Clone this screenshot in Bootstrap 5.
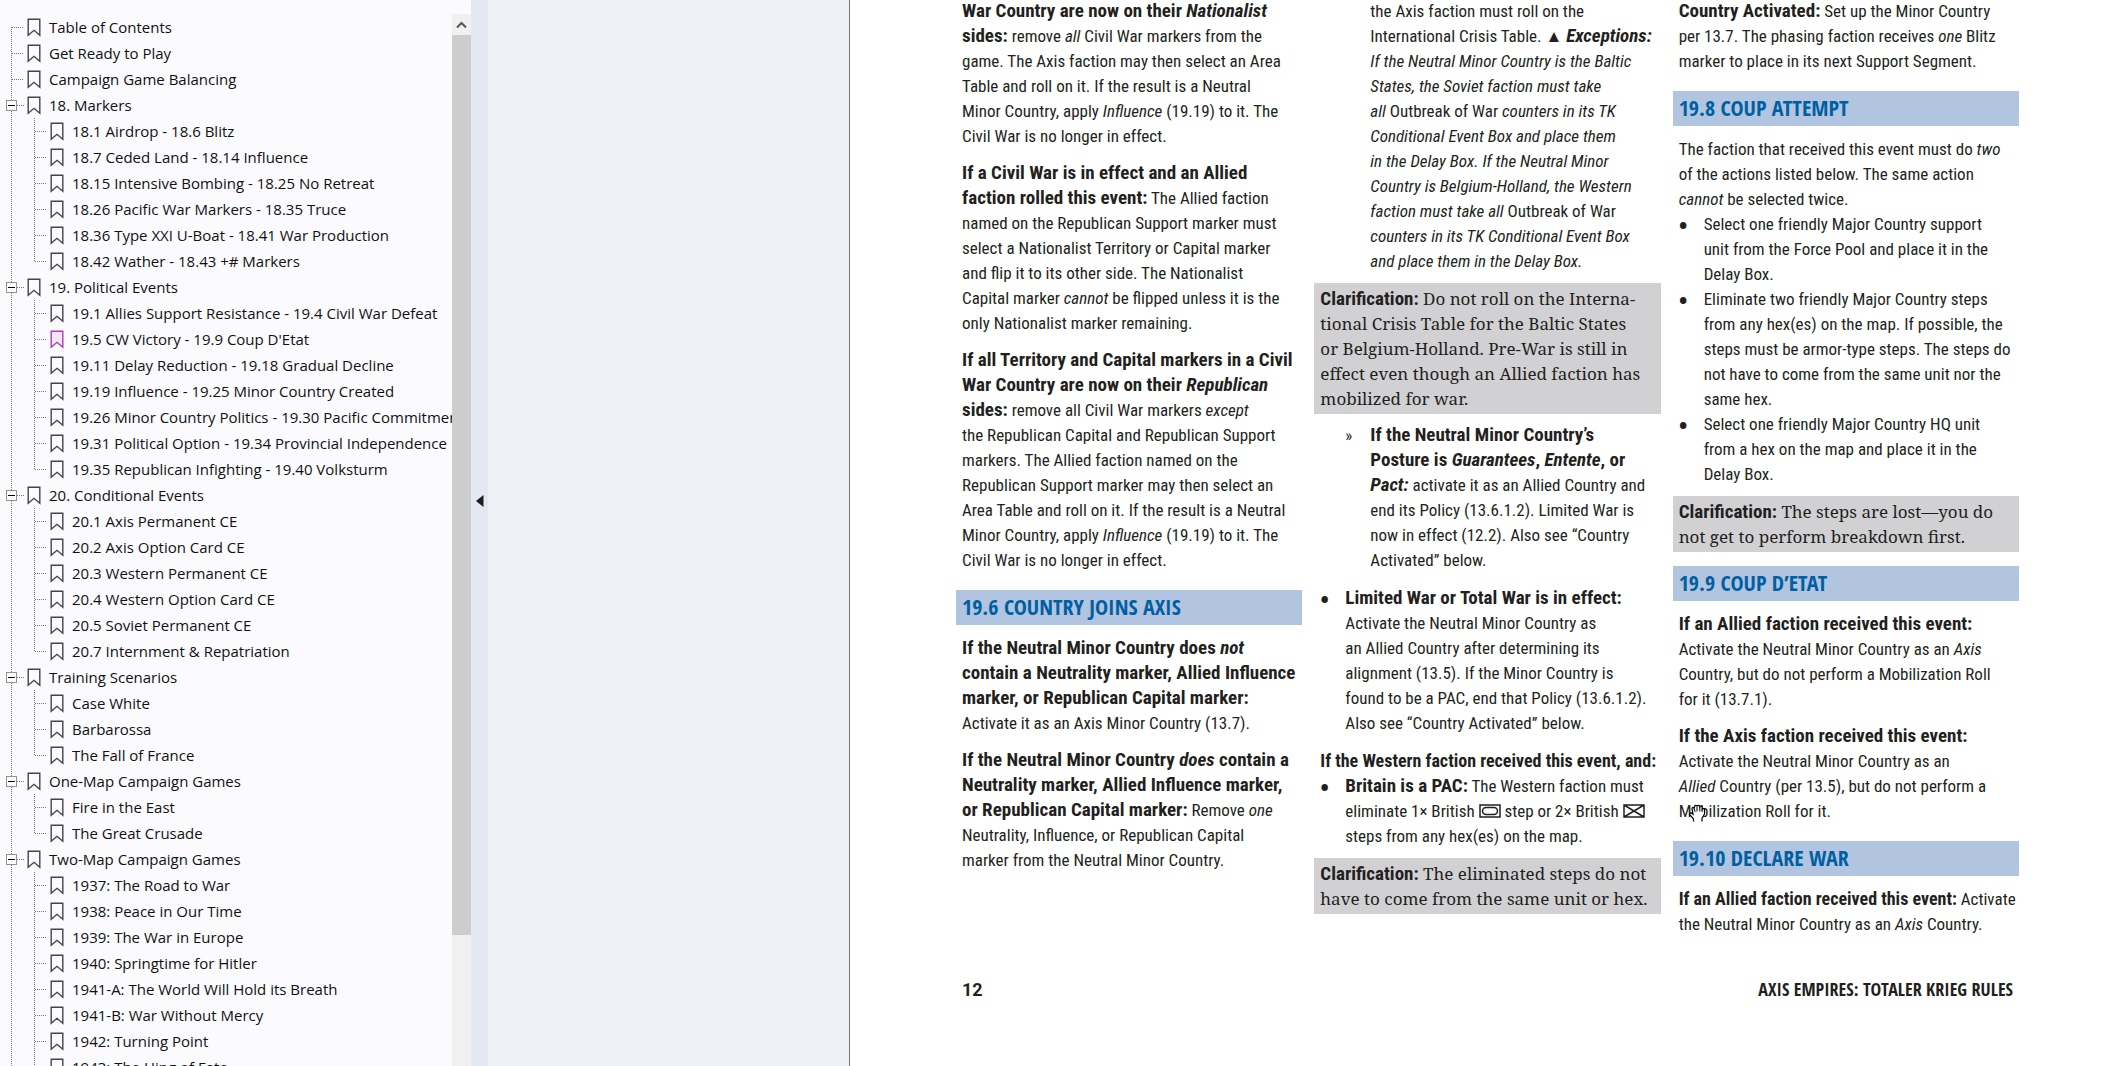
<!DOCTYPE html>
<html lang="en">
<head>
<meta charset="utf-8">
<meta name="viewport" content="width=device-width, initial-scale=1">
<title>Axis Empires: Totaler Krieg Rules</title>
<link href="https://cdn.jsdelivr.net/npm/bootstrap@5.3.0/dist/css/bootstrap.min.css" rel="stylesheet">
<style>
  body { background: #eff0f5; font-family: "Open Sans", "Noto Sans", sans-serif; }
  .outline-pane { width: 471px; background: #fbfbfe; padding-top: 14px; }
  .outline-tree { font-size: 15px; line-height: 26px; color: #111; }
  .outline-tree ul, .outline-tree { list-style: none; margin: 0; padding: 0; }
  .dots-v { background: repeating-linear-gradient(#777 0 1px, transparent 1px 2px) 11px 13px / 1px 100% no-repeat; }
  .outline-tree ul { background: repeating-linear-gradient(#777 0 1px, transparent 1px 2px) 34px 0 / 1px calc(100% - 13px) no-repeat; }
  .outline-row { height: 26px; padding-left: 12px; white-space: nowrap; }
  .outline-row::before { content: ""; width: 12px; height: 1px; margin-right: 3px; flex: none; background: repeating-linear-gradient(90deg, #777 0 1px, transparent 1px 2px); }
  .outline-tree ul .outline-row { padding-left: 35px; }
  .outline-row.has-kids { padding-left: 6px; }
  .outline-row.has-kids::before { order: 1; width: 7px; }
  .outline-row.has-kids a { order: 2; }
  .toggle { width: 11px; height: 11px; border: 1px solid #919191; background: #fff; flex: none; }
  .toggle::before { content: ""; width: 7px; height: 1px; background: #000; }
  .outline-row a { color: inherit; text-decoration: none; gap: 8px; }
  .outline-row svg { width: 14px; height: 19px; fill: none; stroke: #454548; stroke-width: 1.4; flex: none; }
  .outline-row .current svg { stroke: #a93fb5; fill: #f5e6f5; }
  .scroll-track { width: 19px; background: #f0f0f0; flex: none; }
  .scroll-up { height: 21px; background: #f0f0f0; flex: none; }
  .scroll-thumb { height: 900px; background: #cdcdcd; }
  .splitter { width: 17px; background: #e5e8f2; flex: none; }
  .pane-gap { width: 361px; background: #eff0f5; flex: none; }
  .sheet { border-left: 1px solid #77787b; background: #fff; color: #231f20; font-family: "Roboto Condensed", "Open Sans Condensed", Roboto, sans-serif; font-size: 17px; font-weight: 400; line-height: 25px; padding: 0 92px 0 106px; white-space: nowrap; }
  .sheet b { font-size: 19px; font-weight: 700; line-height: 1; }
  .sheet .tight b { font-size: 18px; }
  .rules-cols { gap: 12px; margin-top: -1px; height: 978px; }
  .rules-col { flex: 1 1 0; min-width: 0; }
  .rules-col p { margin: 0 6px 12px; }
  .rules-col ul { list-style: none; margin: 0 6px 13px; padding: 0 0 0 25px; }
  .rules-col li::before { content: "•"; float: left; margin-left: -25px; font-family: "Open Sans Condensed", Roboto, sans-serif; font-weight: 700; font-size: 24px; }
  .rules-col li li::before { content: "»"; font-family: "Roboto Condensed", Roboto, sans-serif; font-size: 17px; font-weight: 400; }
  .rules-col ul ul { margin: 0; }
  .rules-col li.unmarked::before { content: none; }
  .rules-col h2 { margin: 17px 0 11px; padding: 0 6px 2px; font-family: "Open Sans Condensed", "Roboto Condensed", sans-serif; font-size: 22px; font-weight: 700; line-height: 33px; color: #005fa3; background: #b1c4e0; }
  .rules-col .clarify { margin: 9px 0; padding: 3px 6px; background: #d1d1d3; font-family: "Noto Serif", "Liberation Serif", serif; }
  .rules-col .clarify + h2 { margin-top: 14px; }
  .clarify b { font-family: "Roboto Condensed", "Open Sans Condensed", Roboto, sans-serif; }
  .unit-sym { width: 22px; height: 14px; vertical-align: -1px; fill: none; stroke: #231f20; stroke-width: 1.5; }
  .hand { left: 10px; top: 3px; width: 17px; height: 18px; }
  .sheet-foot { padding: 0 6px; font-family: "Open Sans Condensed", "Roboto Condensed", sans-serif; font-size: 18px; font-weight: 700; }
  .page-no { font-family: Roboto, sans-serif; }
</style>
</head>
<body class="vh-100 overflow-hidden">
<svg class="d-none" xmlns="http://www.w3.org/2000/svg">
  <symbol id="bm" viewBox="0 0 14 19"><path d="M1.2 1.2H12.8V17.3L7 12.3L1.2 17.3Z"/></symbol>
</svg>
<div class="d-flex h-100 align-items-stretch">
  <aside class="outline-pane d-flex flex-shrink-0 overflow-hidden" aria-label="Bookmarks">
    <nav class="flex-grow-1 overflow-hidden" aria-label="Document outline">
      <ul class="outline-tree dots-v" id="tree"></ul>
    </nav>
    <div class="scroll-track d-flex flex-column">
      <button class="scroll-up border-0 p-0 d-flex align-items-center justify-content-center" type="button" aria-label="Scroll up">
        <svg width="11" height="8" viewBox="0 0 11 8" fill="none" stroke="#555" stroke-width="2"><path d="M1 6.5L5.5 2L10 6.5"/></svg>
      </button>
      <div class="scroll-thumb"></div>
    </div>
  </aside>
  <div class="splitter d-flex align-items-center justify-content-center">
    <button type="button" class="border-0 bg-transparent p-0 d-flex pb-5 mb-3" aria-label="Collapse panel">
      <svg width="8" height="12" viewBox="0 0 8 12"><path d="M7.5 0V12L0 6Z" fill="#1c1c1c"/></svg>
    </button>
  </div>
  <div class="pane-gap"></div>
  <main class="sheet flex-grow-1 overflow-hidden">
    <div class="rules-cols d-flex">
      <section class="rules-col">
        <p><b>War Country are now on their <i>Nationalist</i><br>sides:</b> remove <i>all</i> Civil War markers from the<br>game. The Axis faction may then select an Area<br>Table and roll on it. If the result is a Neutral<br>Minor Country, apply <i>Influence</i> (19.19) to it. The<br>Civil War is no longer in effect.</p>
        <p><b>If a Civil War is in effect and an Allied<br>faction rolled this event:</b> The Allied faction<br>named on the Republican Support marker must<br>select a Nationalist Territory or Capital marker<br>and flip it to its other side. The Nationalist<br>Capital marker <i>cannot</i> be flipped unless it is the<br>only Nationalist marker remaining.</p>
        <p><b>If all Territory and Capital markers in a Civil<br>War Country are now on their <i>Republican</i><br>sides:</b> remove all Civil War markers <i>except</i><br>the Republican Capital and Republican Support<br>markers. The Allied faction named on the<br>Republican Support marker may then select an<br>Area Table and roll on it. If the result is a Neutral<br>Minor Country, apply <i>Influence</i> (19.19) to it. The<br>Civil War is no longer in effect.</p>
        <h2>19.6 COUNTRY JOINS AXIS</h2>
        <p><b>If the Neutral Minor Country does <i>not</i><br>contain a Neutrality marker, Allied Influence<br>marker, or Republican Capital marker:</b><br>Activate it as an Axis Minor Country (13.7).</p>
        <p><b>If the Neutral Minor Country <i>does</i> contain a<br>Neutrality marker, Allied Influence marker,<br>or Republican Capital marker:</b> Remove <i>one</i><br>Neutrality, Influence, or Republican Capital<br>marker from the Neutral Minor Country.</p>
      </section>
      <section class="rules-col">
        <ul class="mb-0"><li class="unmarked"><ul><li class="unmarked">the Axis faction must roll on the<br>International Crisis Table. ▲ <b><i>Exceptions:</i></b><br><i>If the Neutral Minor Country is the Baltic<br>States, the Soviet faction must take<br>all</i> Outbreak of War <i>counters in its TK<br>Conditional Event Box and place them<br>in the Delay Box. If the Neutral Minor<br>Country is Belgium-Holland, the Western<br>faction must take all</i> Outbreak of War<br><i>counters in its TK Conditional Event Box<br>and place them in the Delay Box.</i></li></ul></li></ul>
        <p class="clarify"><b>Clarification:</b> Do not roll on the Interna-<br>tional Crisis Table for the Baltic States<br>or Belgium-Holland. Pre-War is still in<br>effect even though an Allied faction has<br>mobilized for war.</p>
        <ul><li class="unmarked"><ul><li><b>If the Neutral Minor Country’s<br>Posture is <i>Guarantees</i>, <i>Entente</i>, or<br><i>Pact:</i></b> activate it as an Allied Country and<br>end its Policy (13.6.1.2). Limited War is<br>now in effect (12.2). Also see “Country<br>Activated” below.</li></ul></li></ul>
        <ul><li><b>Limited War or Total War is in effect:</b><br>Activate the Neutral Minor Country as<br>an Allied Country after determining its<br>alignment (13.5). If the Minor Country is<br>found to be a PAC, end that Policy (13.6.1.2).<br>Also see “Country Activated” below.</li></ul>
        <p class="mb-0 tight"><b>If the Western faction received this event, and:</b></p>
        <ul class="mb-0"><li><b>Britain is a PAC:</b> The Western faction must<br>eliminate 1× British <svg class="unit-sym" viewBox="0 0 22 14" role="img" aria-label="armor"><rect x="1" y="1" width="20" height="12"/><rect x="3.5" y="3.5" width="15" height="7" rx="3.5"/></svg> step or 2× British <svg class="unit-sym" viewBox="0 0 22 14" role="img" aria-label="infantry"><path d="M1 1H21V13H1ZL21 13M21 1L1 13"/></svg><br>steps from any hex(es) on the map.</li></ul>
        <p class="clarify"><b>Clarification:</b> The eliminated steps do not<br>have to come from the same unit or hex.</p>
      </section>
      <section class="rules-col">
        <p><b>Country Activated:</b> Set up the Minor Country<br>per 13.7. The phasing faction receives <i>one</i> Blitz<br>marker to place in its next Support Segment.</p>
        <h2>19.8 COUP ATTEMPT</h2>
        <p class="mb-0">The faction that received this event must do <i>two</i><br>of the actions listed below. The same action<br><i>cannot</i> be selected twice.</p>
        <ul class="mb-0"><li>Select one friendly Major Country support<br>unit from the Force Pool and place it in the<br>Delay Box.</li><li>Eliminate two friendly Major Country steps<br>from any hex(es) on the map. If possible, the<br>steps must be armor-type steps. The steps do<br>not have to come from the same unit nor the<br>same hex.</li><li>Select one friendly Major Country HQ unit<br>from a hex on the map and place it in the<br>Delay Box.</li></ul>
        <p class="clarify"><b>Clarification:</b> The steps are lost—you do<br>not get to perform breakdown first.</p>
        <h2>19.9 COUP D’ETAT</h2>
        <p><b>If an Allied faction received this event:</b><br>Activate the Neutral Minor Country as an <i>Axis</i><br>Country, but do not perform a Mobilization Roll<br>for it (13.7.1).</p>
        <p><b>If the Axis faction received this event:</b><br>Activate the Neutral Minor Country as an<br><i>Allied</i> Country (per 13.5), but do not perform a<br><span class="position-relative">Mobilization Roll for it.<svg class="hand position-absolute" viewBox="0 0 17 18" aria-hidden="true"><path d="M4.5 17.5V15L1.5 11.5C.3 9.8 1 8.5 2.2 8.8L4 10.3L3 4.8C2.9 3.3 4.6 3 5 4.3L5.6 2.5C6 1 7.8 1.2 8 2.5C8.5.8 10.6 1 10.8 2.8C11.5 1.6 13.2 2 13.2 3.5V5C14.2 4 15.6 4.6 15.5 6V10L13 14.5V17.5" fill="#fff" stroke="#000" stroke-width="1.2"/><path d="M5.4 4.5L6 8M8 3V7.5M10.8 3V7.5M13.1 5V8" stroke="#000" fill="none"/></svg></span></p>
        <h2>19.10 DECLARE WAR</h2>
        <p class="tight"><b>If an Allied faction received this event:</b> Activate<br>the Neutral Minor Country as an <i>Axis</i> Country.</p>
      </section>
    </div>
    <footer class="sheet-foot d-flex justify-content-between"><span class="page-no">12</span><span>AXIS EMPIRES: TOTALER KRIEG RULES</span></footer>
  </main>
</div>
<script src="https://cdn.jsdelivr.net/npm/bootstrap@5.3.0/dist/js/bootstrap.bundle.min.js"></script>
<script>
  const outline = [
    ["Table of Contents"], ["Get Ready to Play"], ["Campaign Game Balancing"],
    ["18. Markers", ["18.1 Airdrop - 18.6 Blitz", "18.7 Ceded Land - 18.14 Influence", "18.15 Intensive Bombing - 18.25 No Retreat", "18.26 Pacific War Markers - 18.35 Truce", "18.36 Type XXI U-Boat - 18.41 War Production", "18.42 Wather - 18.43 +# Markers"]],
    ["19. Political Events", ["19.1 Allies Support Resistance - 19.4 Civil War Defeat", "19.5 CW Victory - 19.9 Coup D'Etat", "19.11 Delay Reduction - 19.18 Gradual Decline", "19.19 Influence - 19.25 Minor Country Created", "19.26 Minor Country Politics - 19.30 Pacific Commitment", "19.31 Political Option - 19.34 Provincial Independence", "19.35 Republican Infighting - 19.40 Volksturm"]],
    ["20. Conditional Events", ["20.1 Axis Permanent CE", "20.2 Axis Option Card CE", "20.3 Western Permanent CE", "20.4 Western Option Card CE", "20.5 Soviet Permanent CE", "20.7 Internment & Repatriation"]],
    ["Training Scenarios", ["Case White", "Barbarossa", "The Fall of France"]],
    ["One-Map Campaign Games", ["Fire in the East", "The Great Crusade"]],
    ["Two-Map Campaign Games", ["1937: The Road to War", "1938: Peace in Our Time", "1939: The War in Europe", "1940: Springtime for Hitler", "1941-A: The World Will Hold its Breath", "1941-B: War Without Mercy", "1942: Turning Point", "1943: The Hing of Fate"]]
  ];
  const current = "19.5 CW Victory - 19.9 Coup D'Etat";
  function item(title, kids) {
    const li = document.createElement("li");
    const row = document.createElement("div");
    row.className = "outline-row d-flex align-items-center" + (kids ? " has-kids" : "");
    if (kids) row.innerHTML = '<button type="button" class="toggle p-0 d-flex align-items-center justify-content-center" aria-label="Collapse"></button>';
    const a = document.createElement("a");
    a.href = "#";
    a.className = "d-flex align-items-center" + (title === current ? " current" : "");
    a.innerHTML = '<svg><use href="#bm"/></svg>';
    const label = document.createElement("span");
    label.textContent = title;
    a.append(label);
    row.append(a);
    li.append(row);
    if (kids) {
      const ul = document.createElement("ul");
      kids.forEach(k => ul.append(item(k)));
      li.append(ul);
    }
    return li;
  }
  outline.forEach(([t, k]) => document.getElementById("tree").append(item(t, k)));
</script>
</body>
</html>
